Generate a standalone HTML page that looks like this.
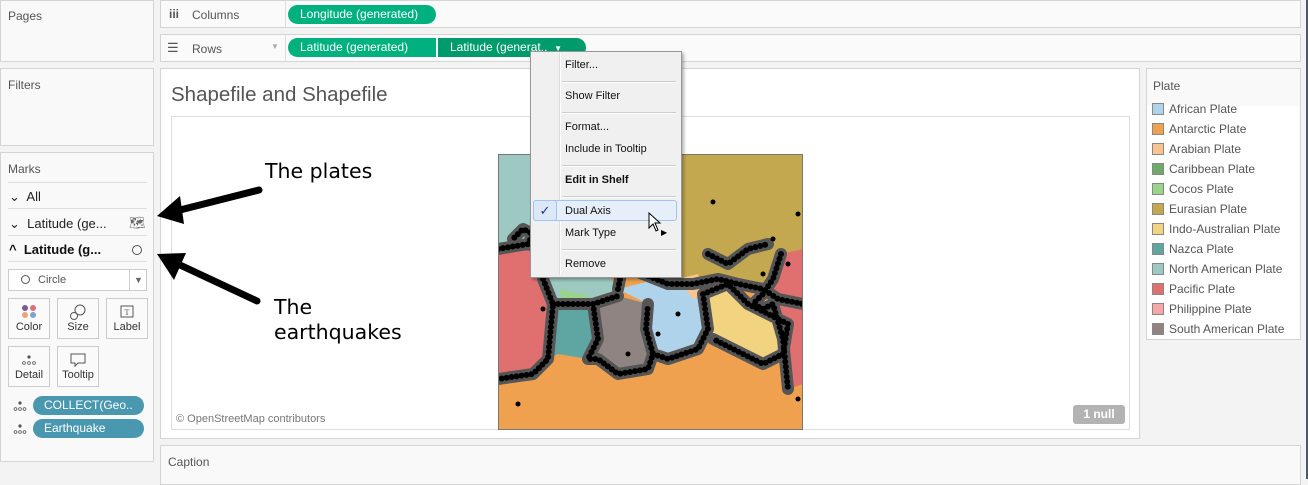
<!DOCTYPE html>
<html><head><meta charset="utf-8"><style>
*{box-sizing:border-box;margin:0;padding:0}
body{width:1308px;height:479px;overflow:hidden;background:#f3f3f3;font-family:"Liberation Sans",sans-serif;font-size:12px;color:#333;position:relative}
.a{position:absolute}
.pan{position:absolute;background:#f9f9f9;border:1px solid #d4d4d4}
.pill{position:absolute;height:19px;border-radius:10px;background:#00b180;color:#fff;font-size:12px;line-height:19px;padding-left:12px}
.mk{position:absolute;left:7px;width:139px;border-bottom:1px solid #ddd}
.btn{position:absolute;width:42px;height:41px;border:1px solid #ccc;background:#fafafa;text-align:center;font-size:11px;color:#333}
.lg{position:absolute;left:1152px;font-size:12px;color:#555}
.lg i{display:inline-block;width:12px;height:12px;border:1px solid #888;vertical-align:-2px;margin-right:5px}
.mi{position:absolute;left:565px;font-size:11px;color:#111}
.sep{position:absolute;left:562px;width:114px;height:2px;border-top:1px solid #ccc;border-bottom:1px solid #fff}
.bp{position:absolute;left:32px;width:111px;height:19px;border-radius:10px;background:#4a98b0;color:#fff;line-height:19px;padding-left:11px;font-size:12px}
</style></head><body>
<div class="pan" style="left:0;top:0;width:154px;height:62px"><div class="a" style="left:7px;top:8px;color:#555">Pages</div></div>
<div class="pan" style="left:0;top:68px;width:154px;height:78px"><div class="a" style="left:7px;top:9px;color:#555">Filters</div></div>
<div class="pan" style="left:0;top:152px;width:154px;height:310px">
 <div class="a" style="left:7px;top:9px;color:#555">Marks</div>
 <div class="mk" style="top:29px;height:1px"></div>
 <div class="a" style="left:8px;top:36px;font-size:13px;color:#222">⌄&nbsp; All</div>
 <div class="mk" style="top:55px;height:1px"></div>
 <div class="a" style="left:8px;top:63px;font-size:13px;color:#222">⌄&nbsp; Latitude (ge...</div>
 <div class="a" style="left:128px;top:62px;font-size:13px;color:#666">🗺</div>
 <div class="mk" style="top:82px;height:1px"></div>
 <div class="a" style="left:8px;top:89px;font-size:13px;color:#111;font-weight:bold">^&nbsp; Latitude (g...</div>
 <div class="a" style="left:131px;top:92px;width:10px;height:10px;border:1px solid #555;border-radius:50%"></div>
 <div class="mk" style="top:108px;height:1px"></div>
 <div class="a" style="left:7px;top:116px;width:139px;height:22px;border:1px solid #ccc;background:#fff">
  <div class="a" style="left:12px;top:5px;width:9px;height:9px;border:1px solid #555;border-radius:50%"></div>
  <div class="a" style="left:29px;top:4px;font-size:11px;color:#555">Circle</div>
  <div class="a" style="left:120px;top:0;height:20px;border-left:1px solid #ccc;width:18px;color:#666;font-size:9px;text-align:center;line-height:20px">▼</div>
 </div>
 <div class="btn" style="left:7px;top:145px"><svg width="20" height="20" style="margin-top:4px"><circle cx="6" cy="5" r="3" fill="#7b5b8b"/><circle cx="14" cy="5" r="3" fill="#e56d7a"/><circle cx="6" cy="12" r="3" fill="#f2a07a"/><circle cx="14" cy="12" r="3" fill="#7fa3d0"/></svg><div style="margin-top:-5px">Color</div></div>
 <div class="btn" style="left:56px;top:145px"><svg width="20" height="20" style="margin-top:4px"><circle cx="12" cy="7" r="5" fill="none" stroke="#555"/><circle cx="6" cy="13" r="3.5" fill="none" stroke="#555"/></svg><div style="margin-top:-5px">Size</div></div>
 <div class="btn" style="left:105px;top:145px"><svg width="20" height="20" style="margin-top:4px"><rect x="4" y="3" width="12" height="11" fill="none" stroke="#555"/><text x="10" y="12" font-size="8" text-anchor="middle" fill="#555" font-family="Liberation Serif">T</text></svg><div style="margin-top:-5px">Label</div></div>
 <div class="btn" style="left:7px;top:193px"><svg width="20" height="20" style="margin-top:4px"><circle cx="10" cy="6" r="1.6" fill="#555"/><circle cx="5" cy="12" r="1.4" fill="none" stroke="#555" stroke-width=".8"/><circle cx="10" cy="12" r="1.4" fill="none" stroke="#555" stroke-width=".8"/><circle cx="15" cy="12" r="1.4" fill="none" stroke="#555" stroke-width=".8"/></svg><div style="margin-top:-5px">Detail</div></div>
 <div class="btn" style="left:56px;top:193px"><svg width="20" height="20" style="margin-top:4px"><path d="M3 3h14v9h-7l-3 3v-3h-4z" fill="none" stroke="#555"/></svg><div style="margin-top:-5px">Tooltip</div></div>
 <svg class="a" style="left:12px;top:246px" width="16" height="14"><circle cx="7" cy="4" r="1.6" fill="#555"/><circle cx="2.5" cy="10" r="1.4" fill="none" stroke="#555" stroke-width=".8"/><circle cx="7" cy="10" r="1.4" fill="none" stroke="#555" stroke-width=".8"/><circle cx="11.5" cy="10" r="1.4" fill="none" stroke="#555" stroke-width=".8"/></svg>
 <div class="bp" style="top:243px">COLLECT(Geo..</div>
 <svg class="a" style="left:12px;top:269px" width="16" height="14"><circle cx="7" cy="4" r="1.6" fill="#555"/><circle cx="2.5" cy="10" r="1.4" fill="none" stroke="#555" stroke-width=".8"/><circle cx="7" cy="10" r="1.4" fill="none" stroke="#555" stroke-width=".8"/><circle cx="11.5" cy="10" r="1.4" fill="none" stroke="#555" stroke-width=".8"/></svg>
 <div class="bp" style="top:266px">Earthquake</div>
</div>

<div class="pan" style="left:160px;top:0;width:1141px;height:28px;background:#fafafa">
 <div class="a" style="left:8px;top:6px;font-weight:bold;color:#555">iii</div>
 <div class="a" style="left:31px;top:7px;color:#555">Columns</div>
 <div class="a" style="left:124px;top:0;height:26px;border-left:1px solid #ddd"></div>
</div>
<div class="pill" style="left:288px;top:5px;width:148px">Longitude (generated)</div>
<div class="pan" style="left:160px;top:34px;width:1141px;height:28px;background:#fafafa">
 <div class="a" style="left:6px;top:5px;color:#555;font-size:13px">☰</div>
 <div class="a" style="left:31px;top:7px;color:#555">Rows</div>
 <div class="a" style="left:110px;top:7px;color:#aaa;font-size:8px">▼</div>
 <div class="a" style="left:124px;top:0;height:26px;border-left:1px solid #ddd"></div>
</div>
<div class="pill" style="left:288px;top:38px;width:148px;border-radius:10px 0 0 10px">Latitude (generated)</div>
<div class="pill" style="left:438px;top:38px;width:148px;background:#009b6d;border-radius:0 10px 10px 0">Latitude (generat..&nbsp;&nbsp;<span style="font-size:8px">▼</span></div>

<div class="a" style="left:160px;top:68px;width:980px;height:371px;background:#fff;border:1px solid #d4d4d4"></div>
<div class="a" style="left:171px;top:83px;font-size:20.5px;color:#555">Shapefile and Shapefile</div>
<div class="a" style="left:171px;top:116px;width:959px;height:314px;border:1px solid #ddd;background:#fff"></div>

<svg class="a" style="left:498px;top:154px" width="305" height="276" viewBox="0 0 305 276">
<rect width="305" height="276" fill="#f0a150"/>
<path d="M0 0H305V150L280 145L265 135L240 130L220 125L195 130L170 130L145 120L120 110L100 95L80 95L60 100L30 90L0 95Z" fill="#c4a84f"/>
<path d="M0 0H100V60L75 85L60 100L30 90L0 95Z" fill="#9ec9c2"/>
<path d="M30 105L60 100L85 110L110 120L120 135L95 150L65 150L40 130Z" fill="#9ec9c2"/>
<path d="M0 95L30 90L45 125L55 150L50 205L35 220L0 225Z" fill="#e07070"/>
<path d="M283 100L305 95V230L290 235L285 185L275 150L265 140Z" fill="#e07070"/>
<path d="M255 135L270 140L265 155L255 150Z" fill="#f7a6a8"/>
<path d="M62 135L90 142L92 150L65 150Z" fill="#9ad38a"/>
<path d="M55 150L95 150L100 185L90 205L60 200L50 205Z" fill="#5fa6a3"/>
<path d="M95 150L120 142L150 150L148 175L155 200L150 215L120 220L100 205L95 185Z" fill="#8f8481"/>
<path d="M120 135L160 125L185 130L200 145L210 175L200 195L170 205L155 200L148 175L150 150Z" fill="#b0d3ec"/>
<path d="M180 125L200 120L205 140L195 145Z" fill="#f9c48e"/>
<path d="M205 140L230 130L250 150L270 160L290 170L285 200L265 210L245 200L215 185L210 165Z" fill="#f2d37f"/>
<g fill="none" stroke-linecap="round" stroke-linejoin="round">
<path d="M0 95L30 90L35 80L25 75L15 85M30 90L60 100L80 95L100 95L120 110L145 120L170 130L195 130L220 125L240 130L265 135L280 145L305 150M45 125L55 150L50 205L35 220L0 225M55 150L95 150L120 142M95 150L100 185L90 205L100 205L120 220L150 215L155 200L148 175L150 150M155 200L170 205L200 195L210 175L205 140L230 130L250 150L270 160L290 170L285 200L265 210L245 200L215 185M283 100L275 125L265 140L255 150L265 155L275 150L285 185L290 235M120 135L125 110M210 100L230 110L250 95L270 90" stroke="#555" stroke-width="12"/>
<path d="M0 95L30 90L35 80L25 75L15 85M30 90L60 100L80 95L100 95L120 110L145 120L170 130L195 130L220 125L240 130L265 135L280 145L305 150M45 125L55 150L50 205L35 220L0 225M55 150L95 150L120 142M95 150L100 185L90 205L100 205L120 220L150 215L155 200L148 175L150 150M155 200L170 205L200 195L210 175L205 140L230 130L250 150L270 160L290 170L285 200L265 210L245 200L215 185M283 100L275 125L265 140L255 150L265 155L275 150L285 185L290 235M120 135L125 110M210 100L230 110L250 95L270 90" stroke="#000" stroke-width="6" stroke-dasharray="0 5"/>
</g>
<g fill="#000"><circle cx="100" cy="110" r="2.5"/><circle cx="275" cy="85" r="2.5"/><circle cx="300" cy="60" r="2.5"/><circle cx="20" cy="250" r="2.5"/><circle cx="215" cy="48" r="2.5"/><circle cx="160" cy="180" r="2.5"/><circle cx="180" cy="160" r="2.5"/><circle cx="300" cy="245" r="2.5"/><circle cx="130" cy="200" r="2.5"/><circle cx="45" cy="155" r="2.5"/><circle cx="290" cy="110" r="2.5"/><circle cx="265" cy="120" r="2.5"/></g>
<rect x=".5" y=".5" width="304" height="275" fill="none" stroke="#777"/>
</svg>
<div class="a" style="left:176px;top:413px;font-size:11px;color:#777">© OpenStreetMap contributors</div>
<div class="a" style="left:1073px;top:405px;width:52px;height:19px;border-radius:3px;background:#b3b3b3;color:#fff;font-weight:bold;font-size:12px;text-align:center;line-height:19px">1 null</div>

<div class="a" style="left:1146px;top:68px;width:155px;height:272px;background:#fff;border:1px solid #d4d4d4;overflow:hidden">
 <div style="height:37px;background:#f9f9f9;padding:10px 0 0 6px;color:#555">Plate</div>
</div>
<div class="lg" style="top:102px"><i style="background:#b0d3ec"></i>African Plate</div>
<div class="lg" style="top:122px"><i style="background:#f0a150"></i>Antarctic Plate</div>
<div class="lg" style="top:142px"><i style="background:#f9c48e"></i>Arabian Plate</div>
<div class="lg" style="top:162px"><i style="background:#6faa6a"></i>Caribbean Plate</div>
<div class="lg" style="top:182px"><i style="background:#9ad38a"></i>Cocos Plate</div>
<div class="lg" style="top:202px"><i style="background:#c4a84f"></i>Eurasian Plate</div>
<div class="lg" style="top:222px"><i style="background:#f2d37f"></i>Indo-Australian Plate</div>
<div class="lg" style="top:242px"><i style="background:#5fa6a3"></i>Nazca Plate</div>
<div class="lg" style="top:262px"><i style="background:#9ec9c2"></i>North American Plate</div>
<div class="lg" style="top:282px"><i style="background:#e07070"></i>Pacific Plate</div>
<div class="lg" style="top:302px"><i style="background:#f7a6a8"></i>Philippine Plate</div>
<div class="lg" style="top:322px"><i style="background:#8f8481"></i>South American Plate</div>

<div class="pan" style="left:160px;top:445px;width:1141px;height:40px"><div class="a" style="left:7px;top:9px;color:#555">Caption</div></div>
<div class="a" style="left:1306px;top:0;width:2px;height:479px;background:#4a5a66"></div>

<div class="a" style="left:530px;top:51px;width:152px;height:227px;background:#f0f0f0;border:1px solid #979797;box-shadow:2px 2px 3px rgba(0,0,0,.3)"></div>
<div class="a" style="left:559px;top:53px;height:222px;border-left:1px solid #ddd;border-right:1px solid #fff;width:2px"></div>
<div class="mi" style="top:59px">Filter...</div>
<div class="sep" style="top:81px"></div>
<div class="mi" style="top:90px">Show Filter</div>
<div class="sep" style="top:112px"></div>
<div class="mi" style="top:121px">Format...</div>
<div class="mi" style="top:143px">Include in Tooltip</div>
<div class="sep" style="top:165px"></div>
<div class="mi" style="top:174px;font-weight:bold">Edit in Shelf</div>
<div class="sep" style="top:196px"></div>
<div class="a" style="left:533px;top:200px;width:144px;height:21px;border:1px solid #9ec4ef;border-radius:3px;background:#e6eff9"></div>
<div class="a" style="left:533px;top:200px;width:24px;height:21px;border:1px solid #9ec4ef;border-radius:3px;background:#dce8f6;color:#2a2a9a;text-align:center;line-height:20px;font-size:13px">✓</div>
<div class="mi" style="top:205px">Dual Axis</div>
<div class="mi" style="top:227px">Mark Type</div>
<div class="a" style="left:661px;top:228px;font-size:8px;color:#000">▶</div>
<div class="sep" style="top:249px"></div>
<div class="mi" style="top:258px">Remove</div>
<svg class="a" style="left:648px;top:212px" width="14" height="22"><path d="M1 1V16L5 12L8 19L10 18L7 11H12Z" fill="#fff" stroke="#000" stroke-width="1"/></svg>

<div class="a" style="left:265px;top:159px;font-family:'DejaVu Sans',sans-serif;font-size:20.5px;color:#000">The plates</div>
<div class="a" style="left:274px;top:295px;font-family:'DejaVu Sans',sans-serif;font-size:20.5px;color:#000;line-height:25px">The<br>earthquakes</div>
<svg class="a" style="left:0;top:0" width="1308" height="479">
<g stroke="#000" stroke-width="7" stroke-linecap="round"><line x1="259" y1="190" x2="180" y2="210"/><line x1="257" y1="301" x2="180" y2="265"/></g>
<path d="M157 216L180 196L184 224Z" fill="#000"/>
<path d="M157 254L186 253L174 280Z" fill="#000"/>
</svg>
</body></html>
